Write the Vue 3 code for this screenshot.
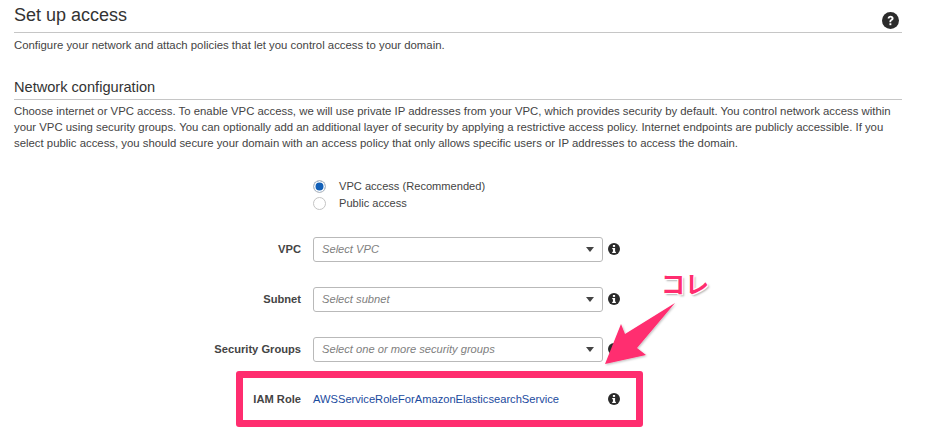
<script setup>
const rows = [
  { label: 'VPC', placeholder: 'Select VPC' },
  { label: 'Subnet', placeholder: 'Select subnet' },
  { label: 'Security Groups', placeholder: 'Select one or more security groups' }
]
</script>

<template>
  <div class="page">
    <header class="head">
      <h2>Set up access</h2>
      <svg class="help" viewBox="0 0 16 16" width="17" height="17">
        <circle cx="8" cy="8" r="8" fill="#2b2b2b" />
        <path d="M5.3 6.2C5.4 4.5 6.6 3.6 8.1 3.6c1.6 0 2.8 1 2.8 2.3 0 1.1-.6 1.7-1.4 2.2-.6.4-.8.6-.8 1.2v.3H7v-.5c0-1 .4-1.5 1.1-2 .6-.4.9-.7.9-1.1 0-.5-.4-.8-.9-.8-.6 0-1 .4-1.1 1z" fill="#fff" />
        <rect x="7" y="10.6" width="1.8" height="1.8" fill="#fff" />
      </svg>
    </header>
    <p class="desc">Configure your network and attach policies that let you control access to your domain.</p>

    <h3>Network configuration</h3>
    <p class="para">Choose internet or VPC access. To enable VPC access, we will use private IP addresses from your VPC, which provides security by default. You control network access within your VPC using security groups. You can optionally add an additional layer of security by applying a restrictive access policy. Internet endpoints are publicly accessible. If you select public access, you should secure your domain with an access policy that only allows specific users or IP addresses to access the domain.</p>

    <div class="radios">
      <label class="radio"><span class="dot on"></span>VPC access (Recommended)</label>
      <label class="radio"><span class="dot"></span>Public access</label>
    </div>

    <div class="form">
      <div v-for="r in rows" :key="r.label" class="row field">
        <span class="lbl">{{ r.label }}</span>
        <div class="select">
          <span>{{ r.placeholder }}</span>
          <i class="caret"></i>
        </div>
        <svg class="info" viewBox="0 0 12 12" width="12" height="12">
          <circle cx="6" cy="6" r="6" fill="#2b2b2b" />
          <rect x="4.9" y="2" width="2.2" height="1.9" fill="#fff" />
          <path d="M4.2 5h2.9v3.8h.8V10H4.2V8.8h.8V6.2h-.8z" fill="#fff" />
        </svg>
      </div>
      <div class="row role">
        <span class="lbl">IAM Role</span>
        <a class="link">AWSServiceRoleForAmazonElasticsearchService</a>
        <svg class="info" viewBox="0 0 12 12" width="12" height="12">
          <circle cx="6" cy="6" r="6" fill="#2b2b2b" />
          <rect x="4.9" y="2" width="2.2" height="1.9" fill="#fff" />
          <path d="M4.2 5h2.9v3.8h.8V10H4.2V8.8h.8V6.2h-.8z" fill="#fff" />
        </svg>
      </div>
    </div>

    <div class="mark"></div>
    <svg class="arrow" viewBox="0 0 926 440" width="926" height="440">
      <defs>
        <filter id="sh" x="-20%" y="-20%" width="140%" height="140%">
          <feDropShadow dx="1" dy="1" stdDeviation="0.8" flood-color="#000" flood-opacity="0.25" />
        </filter>
      </defs>
      <polygon points="605,364 621,324 625,334 675,303 637,348 646,355" fill="#ff2d6f" filter="url(#sh)" />
    </svg>
    <span class="kore">コレ</span>
  </div>
</template>

<style scoped>
.page {
  position: relative;
  width: 926px;
  height: 440px;
  overflow: hidden;
  background: #fff;
  box-sizing: border-box;
  padding: 0 24px 0 14px;
  font-family: "Liberation Sans", Arial, sans-serif;
  font-size: 11.37px;
  color: #444;
}
.head {
  display: flex;
  justify-content: space-between;
  align-items: flex-end;
  height: 32px;
  border-bottom: 1px solid #c6c6c6;
}
h2 {
  margin: 0 0 5px;
  font-size: 18px;
  line-height: 24px;
  font-weight: 400;
  color: #333;
}
.help { margin: 0 3px 3px 0; }
.desc {
  margin: 4px 0 0;
  line-height: 16px;
}
h3 {
  margin: 20px 0 0;
  padding: 3px 0 1px;
  line-height: 22px;
  font-size: 14.6px;
  font-weight: 400;
  color: #333;
  border-bottom: 1px solid #c6c6c6;
}
.para {
  margin: 3px 0 0;
  line-height: 16px;
}
.radios {
  margin: 27px 0 0 299px;
  display: flex;
  flex-direction: column;
  gap: 1px;
}
.radio {
  display: flex;
  align-items: center;
  height: 16px;
  font-size: 11.1px;
  color: #444;
}
.dot {
  box-sizing: border-box;
  width: 13px;
  height: 13px;
  border-radius: 50%;
  border: 1px solid #c4c4c4;
  margin-right: 13px;
  background: #fff;
}
.dot.on {
  background: #1260b8;
  box-shadow: inset 0 0 0 1.5px #fff;
}
.form {
  margin-top: 26px;
  display: flex;
  flex-direction: column;
  gap: 25px;
}
.row {
  display: grid;
  grid-template-columns: 299px 290px 17px;
  align-items: center;
  height: 25px;
  font-size: 11.15px;
}
.lbl {
  font-weight: 700;
  text-align: right;
  padding-right: 12px;
  color: #444;
}
.field .lbl { padding-bottom: 2px; }
.field .info { margin-bottom: 1px; }
.select {
  box-sizing: border-box;
  height: 25px;
  border: 1px solid #b9b9b9;
  border-radius: 3px;
  padding: 0 8px 2px 8px;
  display: flex;
  align-items: center;
  justify-content: space-between;
  font-style: italic;
  color: #808080;
}
.caret {
  width: 0;
  height: 0;
  border-left: 4.5px solid transparent;
  border-right: 4.5px solid transparent;
  border-top: 5px solid #444;
  margin-top: 2px;
}
.info { justify-self: end; }
.role {
  margin-top: -1px;
}
.link {
  color: #1b4b9e;
  white-space: nowrap;
}
.mark {
  position: absolute;
  left: 236px;
  top: 371px;
  width: 407px;
  height: 56px;
  box-sizing: border-box;
  border: 7px solid #ff2d6f;
  border-radius: 3px;
}
.arrow {
  position: absolute;
  left: 0;
  top: 0;
}
.kore {
  position: absolute;
  left: 661px;
  top: 268px;
  font-family: "Noto Sans CJK JP", sans-serif;
  font-weight: 700;
  font-size: 24px;
  line-height: 30px;
  color: #ff2d6f;
  text-shadow: 1px 1px 0 #fff, -1px -1px 0 #fff, 1px -1px 0 #fff, -1px 1px 0 #fff, 2px 2px 2px rgba(0,0,0,.3);
}
</style>
